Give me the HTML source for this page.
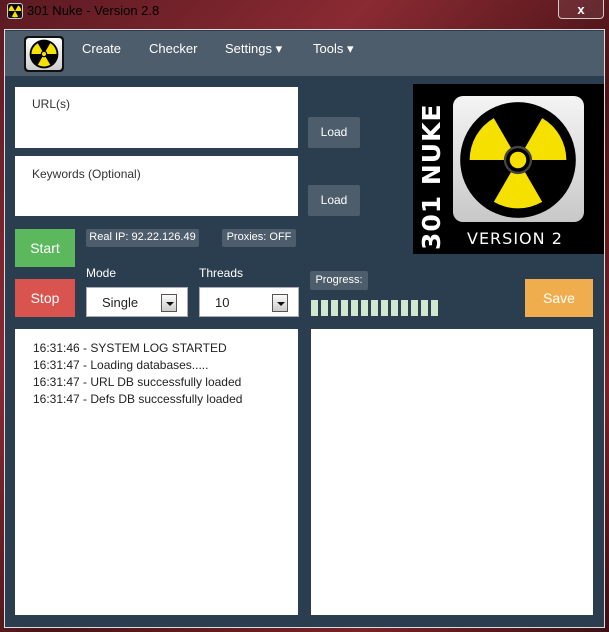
<!DOCTYPE html>
<html><head><meta charset="utf-8"><style>
*{margin:0;padding:0;box-sizing:border-box}
body{width:609px;height:632px;overflow:hidden;position:relative;font-family:"Liberation Sans",sans-serif;
background:linear-gradient(135deg,#5c1a22 0%,#8a2a32 30%,#4a1418 55%,#7a2228 80%,#3a1015 100%)}
.a{position:absolute}
.w{color:#fff}
.lbl{background:#4e5d6c;color:#fff;font-size:11px;border-radius:2px;text-align:center;line-height:17px}
.btn{color:#fff;font-size:14px;text-align:center}
.box{background:#fff}
.sel{background:#fff;border:1px solid #aab;font-size:13px;color:#222}
.arr{position:absolute;right:10px;top:6px;width:16px;height:18px;border:1px solid #555;background:linear-gradient(#fafafa,#ccc)}
.arr:after{content:"";position:absolute;left:4px;top:7px;border-left:4px solid transparent;border-right:4px solid transparent;border-top:4px solid #111}
.log{font-size:12px;color:#222;line-height:17px}
</style></head><body>
<div class="a" style="left:7px;top:3px;width:16px;height:16px;background:#111;border-radius:3px;border:1px solid #ccc">
<svg width="14" height="14" viewBox="-10 -10 20 20"><circle r="9" fill="#f5e000"/><path d="M0 0L-4.5-7.8A9 9 0 0 1 4.5-7.8ZM0 0L9 0A9 9 0 0 1 4.5 7.8ZM0 0L-4.5 7.8A9 9 0 0 1-9 0Z" fill="#000"/></svg></div>
<div class="a" style="left:27px;top:3px;font-size:13px;color:#000">301 Nuke - Version 2.8</div>
<div class="a" style="left:558px;top:-2px;width:46px;height:21px;border:1px solid #ccc;border-radius:0 0 4px 4px;background:rgba(255,255,255,.08);color:#fff;font-weight:bold;text-align:center;font-size:13px;line-height:22px">x</div>
<div class="a" style="left:4px;top:29px;width:601px;height:599px;border:1px solid #ddd;background:#2b3e50"></div>
<div class="a" style="left:5px;top:31px;width:599px;height:45px;background:#4e5d6c"></div>
<div class="a" style="left:24px;top:36px;width:40px;height:36px;background:#111;border-radius:4px;padding:2px">
<div style="width:36px;height:32px;background:linear-gradient(#fff,#ccc);border-radius:3px;position:relative">
<svg class="a" style="left:3px;top:1px" width="30" height="30" viewBox="-10 -10 20 20"><circle r="9.6" fill="#000"/><path d="M0 0L-4.2-7.2A8.3 8.3 0 0 1 4.2-7.2ZM0 0L8.3 0A8.3 8.3 0 0 1 4.2 7.2ZM0 0L-4.2 7.2A8.3 8.3 0 0 1-8.3 0Z" fill="#f5e000" transform="rotate(60)"/><circle r="2.2" fill="#000"/><circle r="1.4" fill="#f5e000"/></svg></div></div>
<div class="a w" style="left:82px;top:41px;font-size:13px">Create</div>
<div class="a w" style="left:149px;top:41px;font-size:13px">Checker</div>
<div class="a w" style="left:225px;top:41px;font-size:13px">Settings ▾</div>
<div class="a w" style="left:313px;top:41px;font-size:13px">Tools ▾</div>

<div class="a box" style="left:15px;top:87px;width:283px;height:61px"></div>
<div class="a" style="left:32px;top:97px;font-size:12px;color:#333">URL(s)</div>
<div class="a box" style="left:15px;top:156px;width:283px;height:60px"></div>
<div class="a" style="left:32px;top:167px;font-size:12px;color:#333">Keywords (Optional)</div>
<div class="a lbl" style="left:308px;top:117px;width:52px;height:31px;line-height:31px;font-size:12px">Load</div>
<div class="a lbl" style="left:308px;top:185px;width:52px;height:31px;line-height:31px;font-size:12px">Load</div>

<div class="a" style="left:413px;top:84px;width:191px;height:170px;background:#000"></div>
<div class="a" style="left:453px;top:96px;width:131px;height:126px;border-radius:10px;background:linear-gradient(#f4f4f4,#c8c8c8)"></div>
<svg class="a" style="left:459px;top:101px" width="118" height="118" viewBox="-10 -10 20 20"><circle r="9.8" fill="#000"/><path d="M0 0L-4.1-7.1A8.2 8.2 0 0 1 4.1-7.1ZM0 0L8.2 0A8.2 8.2 0 0 1 4.1 7.1ZM0 0L-4.1 7.1A8.2 8.2 0 0 1-8.2 0Z" fill="#f5e000" transform="rotate(60)"/><circle r="2.2" fill="#000" stroke="#444" stroke-width=".4"/><circle r="1.4" fill="#f5e000"/></svg>
<div class="a" style="left:467px;top:229px;font-size:16px;color:#fff;font-family:'DejaVu Sans',sans-serif;letter-spacing:1px">VERSION 2</div>
<div class="a" style="left:417px;top:250px;transform:rotate(-90deg);transform-origin:0 0;font-size:25px;line-height:30px;font-weight:bold;color:#fff;font-family:'DejaVu Sans',sans-serif;white-space:nowrap;letter-spacing:1px">301 NUKE</div>

<div class="a btn" style="left:15px;top:229px;width:60px;height:38px;line-height:38px;background:#5cb85c">Start</div>
<div class="a btn" style="left:15px;top:279px;width:60px;height:38px;line-height:38px;background:#d9534f">Stop</div>
<div class="a lbl" style="left:86px;top:229px;width:113px;height:18px">Real IP: 92.22.126.49</div>
<div class="a lbl" style="left:222px;top:229px;width:74px;height:18px">Proxies: OFF</div>
<div class="a w" style="left:86px;top:266px;font-size:12px">Mode</div>
<div class="a w" style="left:199px;top:266px;font-size:12px">Threads</div>
<div class="a sel" style="left:86px;top:287px;width:102px;height:30px;padding:7px 0 0 15px">Single<div class="arr"></div></div>
<div class="a sel" style="left:199px;top:287px;width:100px;height:30px;padding:7px 0 0 15px">10<div class="arr"></div></div>
<div class="a lbl" style="left:310px;top:271px;width:58px;height:19px;line-height:19px">Progress:</div>
<div class="a" style="left:311px;top:300px;height:16px;display:flex;gap:3px">
<i style="width:7px;background:#d0e8d0"></i><i style="width:7px;background:#d0e8d0"></i><i style="width:7px;background:#d0e8d0"></i><i style="width:7px;background:#d0e8d0"></i><i style="width:7px;background:#d0e8d0"></i><i style="width:7px;background:#d0e8d0"></i><i style="width:7px;background:#d0e8d0"></i><i style="width:7px;background:#d0e8d0"></i><i style="width:7px;background:#d0e8d0"></i><i style="width:7px;background:#d0e8d0"></i><i style="width:7px;background:#d0e8d0"></i><i style="width:7px;background:#d0e8d0"></i><i style="width:7px;background:#d0e8d0"></i></div>
<div class="a btn" style="left:525px;top:279px;width:68px;height:38px;line-height:38px;background:#f0ad4e">Save</div>

<div class="a box" style="left:15px;top:329px;width:283px;height:286px"></div>
<div class="a log" style="left:33px;top:340px">16:31:46 - SYSTEM LOG STARTED<br>16:31:47 - Loading databases.....<br>16:31:47 - URL DB successfully loaded<br>16:31:47 - Defs DB successfully loaded</div>
<div class="a box" style="left:311px;top:329px;width:282px;height:286px"></div>
</body></html>
